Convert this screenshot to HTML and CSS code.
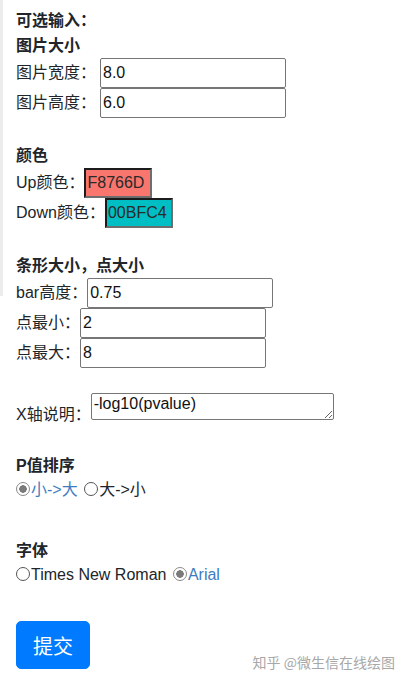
FILE: index.html
```html
<!DOCTYPE html>
<html lang="zh">
<head>
    <meta charset="UTF-8">
    <meta name="viewport" content="width=device-width, initial-scale=1.0">
    <title>可选输入</title>
    <link rel="stylesheet" href="styles.css">
</head>
<body>
<div class="edge"></div>
<form class="opts">
    <div class="title">可选输入：</div>
    <div class="title">图片大小</div>
    <div class="row"><label>图片宽度：</label><input class="num gap" type="text" value="8.0"></div>
    <div class="row"><label>图片高度：</label><input class="num gap" type="text" value="6.0"></div>

    <div class="title sec">颜色</div>
    <div class="row"><label>Up颜色：</label><input class="color up" type="text" value="F8766D"></div>
    <div class="row"><label>Down颜色：</label><input class="color down" type="text" value="00BFC4"></div>

    <div class="title sec">条形大小，点大小</div>
    <div class="row"><label>bar高度：</label><input class="num" type="text" value="0.75"></div>
    <div class="row"><label>点最小：</label><input class="num" type="text" value="2"></div>
    <div class="row"><label>点最大：</label><input class="num" type="text" value="8"></div>

    <div class="xrow"><label>X轴说明：</label><textarea class="xlab">-log10(pvalue)</textarea></div>

    <div class="title psort">P值排序</div>
    <div class="radios">
        <label class="on"><input type="radio" name="sort" checked>小-&gt;大</label>
        <label><input type="radio" name="sort">大-&gt;小</label>
    </div>

    <div class="title font">字体</div>
    <div class="radios">
        <label><input type="radio" name="font">Times New Roman</label>
        <label class="on"><input type="radio" name="font" checked>Arial</label>
    </div>

    <button class="btn" type="button">提交</button>
</form>
<div class="mark">知乎 @微生信在线绘图</div>
</body>
</html>
```

FILE: styles.css
```css
body {
    margin: 0;
    background: #fff;
    color: #212529;
    font-family: "Liberation Sans", "Noto Sans CJK SC", sans-serif;
    font-size: 16px;
}

.edge {
    position: absolute;
    left: 0;
    top: 0;
    width: 3px;
    height: 296px;
    background: #ececec;
}

.opts {
    padding: 8px 0 0 16px;
}

.title {
    font-weight: bold;
    line-height: 25px;
}

.sec {
    margin-top: 25px;
}

.row {
    display: flex;
    align-items: center;
    height: 30px;
    line-height: 30px;
    white-space: nowrap;
}

.num {
    box-sizing: border-box;
    width: 186px;
    height: 30px;
    margin: 0;
    padding: 1px 2px;
    border: 1px solid #767676;
    border-radius: 2px;
    font: 16px "Liberation Sans", sans-serif;
    color: #111;
}

.gap {
    margin-left: 4px;
}

.color {
    box-sizing: border-box;
    width: 68px;
    height: 30px;
    margin: 0;
    padding: 0 1px;
    border: 2px solid;
    border-color: #1c1c1c #6e6e6e #6e6e6e #1c1c1c;
    font: 16px "Liberation Sans", sans-serif;
    color: #2a2a2a;
}

.up {
    background: #F8766D;
}

.down {
    background: #00BFC4;
}

.xrow {
    display: flex;
    align-items: flex-end;
    margin-top: 25px;
    white-space: nowrap;
}

.xrow label {
    line-height: 16px;
    margin-bottom: -3px;
}

.xlab {
    box-sizing: border-box;
    width: 243px;
    height: 27px;
    margin: 0;
    padding: 1px 2px;
    border: 1px solid #767676;
    border-radius: 2px;
    font: 16px "Liberation Sans", sans-serif;
    color: #111;
}

.psort {
    margin-top: 33px;
}

.font {
    margin-top: 36px;
}

.radios {
    line-height: 24px;
    white-space: nowrap;
}

.radios label {
    margin-right: 2px;
}

.radios .on {
    color: #3d7cc0;
}

.radios input {
    appearance: none;
    box-sizing: border-box;
    width: 14px;
    height: 14px;
    margin: 0 1px 0 0;
    border: 1px solid #555;
    border-radius: 50%;
    background: #fff;
    vertical-align: -1px;
}

.radios input:checked {
    border-color: #8a8a8a;
    background: radial-gradient(circle, #7a7a7a 0, #7a7a7a 3.5px, #fff 4px);
}

.btn {
    margin-top: 34px;
    height: 48px;
    padding: 0 16px;
    border: 1px solid #007bff;
    border-radius: 5px;
    background: #007bff;
    color: #fff;
    font: 20px "Noto Sans CJK SC", sans-serif;
}

.mark {
    position: absolute;
    right: 12px;
    top: 652px;
    color: #a8a8a8;
    font: 14px "Noto Sans CJK SC", sans-serif;
}
```
